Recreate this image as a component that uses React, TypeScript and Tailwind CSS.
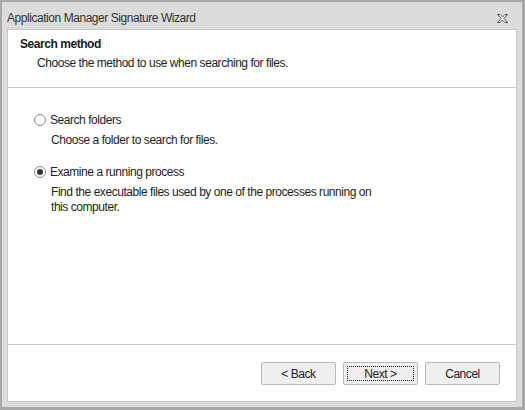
import React from "react";

function Radio({ checked }: { checked?: boolean }) {
  return (
    <div className="w-[12px] h-[12px] rounded-full border border-[#8a8a8a] bg-white flex items-center justify-center shrink-0">
      {checked && <div className="w-[6px] h-[6px] rounded-full bg-[#333333]" />}
    </div>
  );
}

function Btn({ label, focus }: { label: string; focus?: boolean }) {
  return (
    <div className="relative w-[75px] h-[23px] rounded-[2px] border border-[#b9b9b9] bg-[#efefef] flex items-center justify-center text-[12px] text-[#222]">
      {focus && <div className="absolute inset-[3px] border border-dotted border-[#222]" />}
      <span className="relative">{label}</span>
    </div>
  );
}

export default function App() {
  return (
    <div
      className="w-[525px] h-[410px] bg-[#dcdcdc] border-l-2 border-t-2 border-r-[3px] border-b-[3px] border-[#a8a8a8] flex flex-col text-[#1e1e1e] tracking-[-0.45px]"
      style={{ fontFamily: '"Liberation Sans", Arial, sans-serif' }}
    >
      <div className="h-[27px] flex items-center justify-between pl-[5px] pr-[14px] text-[12px] text-[#333]">
        <span className="mt-[4px]">Application Manager Signature Wizard</span>
        <svg width="11" height="9" viewBox="0 0 11 9" className="mt-[5px]">
          <polygon
            points="0.5,0.5 3,0.5 5.5,3 8,0.5 10.5,0.5 7,4.5 10.5,8.5 8,8.5 5.5,6 3,8.5 0.5,8.5 4,4.5"
            fill="#fafafa"
            stroke="#505050"
            strokeWidth="1"
          />
        </svg>
      </div>
      <div className="mx-[5px] mb-[5px] flex-1 bg-white border border-[#c6c6c6] flex flex-col">
        <div className="h-[57px] pl-[12px] pt-[6px] text-[12px]">
          <div className="font-bold leading-[16px] text-[#1a1a1a]">Search method</div>
          <div className="pl-[17px] mt-[3px] leading-[16px] text-[#222]">Choose the method to use when searching for files.</div>
        </div>
        <div className="h-px bg-[#c6c6c6]" />
        <div className="flex-1 pl-[26px] pt-[24px] text-[12px]">
          <div className="flex items-center gap-[4px] leading-[16px]">
            <Radio />
            <span>Search folders</span>
          </div>
          <div className="pl-[17px] mt-[4px] leading-[16px]">Choose a folder to search for files.</div>
          <div className="flex items-center gap-[4px] leading-[16px] mt-[16px]">
            <Radio checked />
            <span>Examine a running process</span>
          </div>
          <div className="pl-[17px] mt-[5px] leading-[15px] w-[350px]">
            Find the executable files used by one of the processes running on this computer.
          </div>
        </div>
        <div className="h-px bg-[#c6c6c6]" />
        <div className="h-[56px] pt-[17px] pr-[16px] flex justify-end gap-[7px]">
          <Btn label="< Back" />
          <Btn label="Next >" focus />
          <Btn label="Cancel" />
        </div>
      </div>
    </div>
  );
}
